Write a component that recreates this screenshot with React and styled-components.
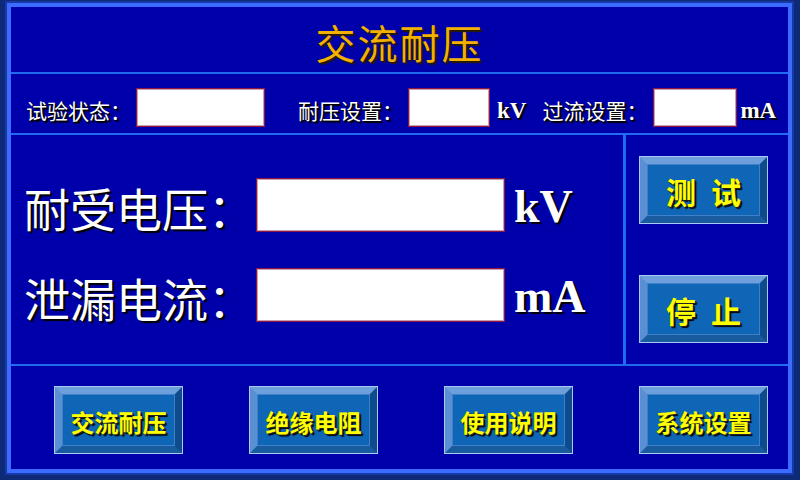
import React from "react";
import styled, { createGlobalStyle } from "styled-components";

const Global = createGlobalStyle`
  html, body { margin: 0; padding: 0; background: #0e2a76; }
  body { width: 800px; height: 480px; overflow: hidden; }
  #root { width: 800px; height: 480px; }
`;

const CJK = `"Noto Sans CJK SC", "Noto Sans", sans-serif`;
const SERIF = `"Liberation Serif", "Noto Sans CJK SC", serif`;

const Screen = styled.div`
  width: 800px;
  height: 480px;
  box-sizing: border-box;
  padding: 3px 8px 7px 7px;
  background: #0e2a76;
`;

const Frame = styled.div`
  box-sizing: border-box;
  width: 785px;
  height: 470px;
  border: 4px solid #3b6cff;
  box-shadow: 0 0 0 2px #1638a8;
  background: #0000aa;
  display: flex;
  flex-direction: column;
`;

const Title = styled.div`
  height: 65px;
  box-sizing: border-box;
  padding-top: 4px;
  display: flex;
  align-items: center;
  justify-content: center;
  font-family: ${CJK};
  font-size: 40px;
  color: #f2b000;
  text-shadow: 2px 2px 1px #2a1a00;
  letter-spacing: 2px;
`;

const HLine = styled.div`
  height: 2px;
  background: #1f6cf0;
  flex: none;
`;

const SettingsRow = styled.div`
  height: 59px;
  box-sizing: border-box;
  padding: 14px 0 0 15px;
  display: flex;
  align-items: flex-start;
`;

const SmallLabel = styled.span`
  font-family: ${CJK};
  font-size: 21px;
  line-height: 39px;
  margin-top: 3px;
  margin-left: ${(p) => p.$ml || 0}px;
  color: #ffffff;
  text-shadow: 1px 1px 0 #000, 2px 2px 1px #000;
  white-space: nowrap;
`;

const SmallUnit = styled.span`
  font-family: ${SERIF};
  font-weight: bold;
  font-size: 23px;
  line-height: 39px;
  margin-top: 3px;
  margin-left: ${(p) => p.$ml || 0}px;
  color: #ffffff;
  text-shadow: 1px 1px 0 #000, 2px 2px 1px #000;
`;

const Field = styled.div`
  box-sizing: border-box;
  width: ${(p) => p.$w}px;
  height: ${(p) => p.$h}px;
  margin-left: ${(p) => p.$ml || 0}px;
  background: #ffffff;
  border: 1px solid #8e1444;
  box-shadow: inset 0 0 0 1px #c8a0b4;
  flex: none;
`;

const Main = styled.div`
  height: 229px;
  display: flex;
`;

const Readings = styled.div`
  width: 612px;
  box-sizing: border-box;
  padding: 43px 0 0 13px;
  display: flex;
  flex-direction: column;
  gap: 36px;
`;

const ReadingRow = styled.div`
  display: flex;
  align-items: center;
  height: 54px;
`;

const BigLabel = styled.span`
  font-family: ${CJK};
  font-size: 46px;
  line-height: 54px;
  margin-top: 4px;
  color: #ffffff;
  text-shadow: 2px 2px 1px #000;
  white-space: nowrap;
  width: 232px;
  flex: none;
`;

const BigUnit = styled.span`
  font-family: ${SERIF};
  font-weight: bold;
  font-size: 46px;
  line-height: 54px;
  margin-left: 9px;
  margin-top: 4px;
  color: #ffffff;
  text-shadow: 2px 2px 1px #000;
`;

const VLine = styled.div`
  width: 3px;
  background: #1f6cf0;
  flex: none;
`;

const SideButtons = styled.div`
  flex: 1;
  box-sizing: border-box;
  padding: 21px 0 0 13px;
  display: flex;
  flex-direction: column;
  gap: 51px;
`;

const BottomBar = styled.div`
  flex: 1;
  box-sizing: border-box;
  padding: 20px 0 0 43px;
  display: flex;
  gap: 66px;
  align-items: flex-start;
`;

const BevelButton = styled.button`
  box-sizing: border-box;
  width: 127px;
  height: 66px;
  margin: 1px;
  padding: 0;
  border: 7px solid;
  border-color: #6e9fdd #0d4b8c #195b9f #5a8fd3;
  box-shadow: 0 0 0 1px #a9c9f3, inset 0 0 0 1px #3f80c8;
  background: #1066b6;
  display: flex;
  align-items: center;
  justify-content: center;
  font-family: ${CJK};
  font-weight: bold;
  font-size: ${(p) => (p.$big ? 30 : 24)}px;
  color: #ffff00;
  text-shadow: 1px 1px 0 #222, 2px 2px 1px #000;
  cursor: pointer;
  flex: none;
`;

const ButtonText = styled.span`
  letter-spacing: ${(p) => (p.$spaced ? "15px" : "0")};
  margin-right: ${(p) => (p.$spaced ? "-15px" : "0")};
  margin-top: 2px;
  white-space: nowrap;
`;

export default function App() {
  return (
    <>
      <Global />
      <Screen>
        <Frame>
          <Title>交流耐压</Title>
          <HLine />
          <SettingsRow>
            <SmallLabel>试验状态：</SmallLabel>
            <Field $w={129} $h={39} $ml={5} />
            <SmallLabel $ml={33}>耐压设置：</SmallLabel>
            <Field $w={82} $h={39} $ml={5} />
            <SmallUnit $ml={7}>kV</SmallUnit>
            <SmallLabel $ml={16}>过流设置：</SmallLabel>
            <Field $w={84} $h={39} $ml={6} />
            <SmallUnit $ml={3}>mA</SmallUnit>
          </SettingsRow>
          <HLine />
          <Main>
            <Readings>
              <ReadingRow>
                <BigLabel>耐受电压：</BigLabel>
                <Field $w={249} $h={54} />
                <BigUnit>kV</BigUnit>
              </ReadingRow>
              <ReadingRow>
                <BigLabel>泄漏电流：</BigLabel>
                <Field $w={249} $h={54} />
                <BigUnit>mA</BigUnit>
              </ReadingRow>
            </Readings>
            <VLine />
            <SideButtons>
              <BevelButton $big>
                <ButtonText $spaced>测试</ButtonText>
              </BevelButton>
              <BevelButton $big>
                <ButtonText $spaced>停止</ButtonText>
              </BevelButton>
            </SideButtons>
          </Main>
          <HLine />
          <BottomBar>
            <BevelButton><ButtonText>交流耐压</ButtonText></BevelButton>
            <BevelButton><ButtonText>绝缘电阻</ButtonText></BevelButton>
            <BevelButton><ButtonText>使用说明</ButtonText></BevelButton>
            <BevelButton><ButtonText>系统设置</ButtonText></BevelButton>
          </BottomBar>
        </Frame>
      </Screen>
    </>
  );
}
